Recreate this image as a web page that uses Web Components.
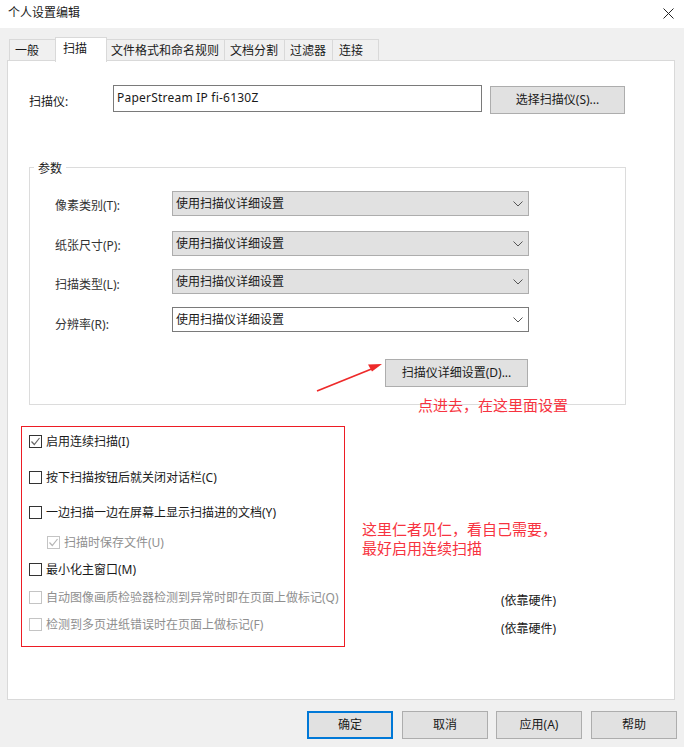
<!DOCTYPE html>
<html lang="zh"><head><meta charset="utf-8"><style>
html,body{margin:0;padding:0;background:#f0f0f0}
body{font:12px/16px "Noto Sans","Noto Sans CJK SC",sans-serif;color:#1a1a1a;width:684px;height:747px;overflow:hidden}
</style></head><body>
<x-dialog>
  <x-titlebar slot="title">个人设置编辑</x-titlebar>
  <x-tabs slot="tabs"><x-tab w="47" pad="5">一般</x-tab><x-tab w="52" pad="7" active>扫描</x-tab><x-tab w="119" pad="4">文件格式和命名规则</x-tab><x-tab w="61" pad="5">文档分割</x-tab><x-tab w="49" pad="5">过滤器</x-tab><x-tab w="47" pad="6">连接</x-tab></x-tabs>
  <x-panel slot="panel">
    <x-scanner-row></x-scanner-row>
    <x-group label="参数">
      <x-field label="像素类别(T):" off="7" style="margin-top:23px"></x-field>
      <x-field label="纸张尺寸(P):" off="7" style="margin-top:15px"></x-field>
      <x-field label="扫描类型(L):" off="8" style="margin-top:13px"></x-field>
      <x-field label="分辨率(R):" off="10" enabled style="margin-top:13px"></x-field>
      <x-button w="143" h="28" style="margin:27px 0 0 355px">扫描仪详细设置(D)...</x-button>
    </x-group>
    <x-options>
      <x-check checked gap="8">启用连续扫描(I)</x-check>
      <x-check gap="23">按下扫描按钮后就关闭对话栏(C)</x-check>
      <x-check gap="22">一边扫描一边在屏幕上显示扫描进的文档(Y)</x-check>
      <x-check checked disabled indent="18" gap="17">扫描时保存文件(U)</x-check>
      <x-check gap="14">最小化主窗口(M)</x-check>
      <x-check disabled gap="15">自动图像画质检验器检测到异常时即在页面上做标记(Q)</x-check>
      <x-check disabled gap="14">检测到多页进纸错误时在页面上做标记(F)</x-check>
    </x-options>
    <x-note style="left:354px;top:459px;width:210px;line-height:19px">这里仁者见仁，看自己需要，<br>最好启用连续扫描</x-note>
    <x-note style="left:410px;top:334px;width:170px;line-height:20px">点进去，在这里面设置</x-note>
    <x-hw style="left:493px;top:532px">(依靠硬件)</x-hw>
    <x-hw style="left:493px;top:560px">(依靠硬件)</x-hw>
    <x-arrow style="left:308px;top:298px"></x-arrow>
  </x-panel>
  <x-footer slot="footer">
    <x-button w="86" h="28" primary>确定</x-button>
    <x-button w="86" h="28" style="margin-left:9px">取消</x-button>
    <x-button w="86" h="28" style="margin-left:8px">应用(A)</x-button>
    <x-button w="86" h="28" style="margin-left:9px">帮助</x-button>
  </x-footer>
</x-dialog>
<script>
const def=(name,html,init)=>customElements.define(name,class extends HTMLElement{
  constructor(){super();this.attachShadow({mode:'open'}).innerHTML=typeof html==='function'?html(this):html;}
  connectedCallback(){
    if(typeof html==='function')this.shadowRoot.innerHTML=html(this);
    if(init)init(this);
  }
});
def('x-dialog',`<style>:host{display:flex;flex-direction:column;width:684px;height:747px}</style>
<slot name="title"></slot><slot name="tabs"></slot><slot name="panel"></slot><slot name="footer"></slot>`);
def('x-titlebar',`<style>:host{display:flex;align-items:center;justify-content:space-between;height:28px;background:#fff;padding:0 10px 2px 8px;box-sizing:border-box;flex:none}
svg{display:block;margin-top:0}</style><slot></slot><svg width="11" height="11" viewBox="0 0 11 11"><path d="M.5.5l10 10M10.5.5l-10 10" stroke="#222" stroke-width="1" fill="none"/></svg>`);
def('x-tabs',`<style>:host{display:flex;height:33px;padding:0 0 0 9px;align-items:flex-end;flex:none;box-sizing:border-box;position:relative;z-index:1;margin-bottom:-1px}</style><slot></slot>`);
def('x-tab',h=>{const a=h.hasAttribute('active');return `<style>:host{display:flex;box-sizing:border-box;width:${h.getAttribute('w')}px;height:${a?25:22}px;${a?'margin-bottom:-1px;':''}
background:${a?'#fff':'#f0f0f0'};border:1px solid #d9d9d9;${a?'border-bottom:0;':''}margin-right:-1px;
align-items:center;justify-content:flex-start;padding:${a?0:1}px 0 ${a?2:0}px ${h.getAttribute('pad')}px;white-space:nowrap;color:#1a1a1a;${a?'position:relative;z-index:2':''}}</style><slot></slot>`});
def('x-panel',`<style>:host{display:block;position:relative;box-sizing:border-box;width:668px;height:640px;margin-left:7px;background:#fff;border:1px solid #d9d9d9;padding:24px 0 0 21px;flex:none}</style><slot></slot>`);
def('x-scanner-row',`<style>:host{display:flex;align-items:flex-start}
.l{width:84px;margin-top:9px;flex:none}
.i{width:369px;height:27px;box-sizing:border-box;border:1px solid #7a7a7a;padding:4px 0 0 3px;letter-spacing:.22px;flex:none}
</style><div class="l">扫描仪:</div><div class="i">PaperStream IP fi-6130Z</div><x-button w="135" h="28" style="margin:1px 0 0 8px">选择扫描仪(S)...</x-button>`);
def('x-button',h=>{const p=h.hasAttribute('primary');return `<style>:host{display:flex;box-sizing:border-box;width:${h.getAttribute('w')}px;height:${h.getAttribute('h')}px;background:#e1e1e1;border:${p?'2px solid #0078d7':'1px solid #adadad'};align-items:center;justify-content:center;white-space:nowrap;color:#1a1a1a;flex:none}</style><slot></slot>`});
def('x-group',h=>`<style>:host{display:block;box-sizing:border-box;position:relative;width:597px;height:238px;margin-top:53px;border:1px solid #dcdcdc}
.lg{position:absolute;left:4px;top:-7px;background:#fff;padding:0 4px}</style><div class="lg">${h.getAttribute('label')}</div><slot></slot>`);
def('x-field',h=>`<style>:host{display:flex;height:25px;box-sizing:border-box;padding-left:25px}
.l{width:117px;flex:none;padding-top:${h.getAttribute('off')}px;color:#333}
.s{display:flex;align-items:center;justify-content:space-between;width:357px;box-sizing:border-box;padding:0 4px 0 3px;border:1px solid ${h.hasAttribute('enabled')?'#7a7a7a':'#adadad'};background:${h.hasAttribute('enabled')?'#fff':'#e1e1e1'}}
svg{display:block;margin-top:1px}</style><div class="l">${h.getAttribute('label')}</div><div class="s"><span>使用扫描仪详细设置</span><svg width="12" height="8" viewBox="0 0 12 8"><path d="M1.5 1.5L6 6l4.5-4.5" stroke="#555" stroke-width="1" fill="none"/></svg></div>`);
def('x-options',`<style>:host{display:block;box-sizing:border-box;width:324px;height:221px;margin:21px 0 0 -8px;border:1px solid #ed1c24;padding-left:7px}</style><slot></slot>`);
def('x-check',h=>{const d=h.hasAttribute('disabled'),c=h.hasAttribute('checked');return `<style>:host{display:flex;align-items:center;height:13px;margin-top:${h.getAttribute('gap')}px;margin-left:${h.getAttribute('indent')||0}px;color:${d?'#8f8f8f':'#1a1a1a'};white-space:nowrap}
.b{box-sizing:border-box;width:13px;height:13px;border:1px solid ${d?'#c4c4c4':'#333'};margin-right:4px;flex:none;background:#fff}svg{display:block}</style><div class="b">${c?`<svg width="11" height="11" viewBox="0 0 11 11"><path d="M1.5 5.5l2.8 3L9.5 2" stroke="${d?'#b5b5b5':'#666'}" stroke-width="1.2" fill="none"/></svg>`:''}</div><slot></slot>`});
def('x-note',`<style>:host{position:absolute;display:block;color:#f73340;font-size:15px;white-space:nowrap}</style><slot></slot>`);
def('x-hw',`<style>:host{position:absolute;display:block;white-space:nowrap;font-size:12px}</style><slot></slot>`);
def('x-arrow',`<style>:host{position:absolute;display:block;width:70px;height:34px}svg{display:block}</style><svg width="70" height="34" viewBox="0 0 70 34"><path d="M1 32L58 9" stroke="#ee2a2a" stroke-width="1.8" fill="none"/><path d="M66 5L52 5.5 56 12.5z" fill="#ee2a2a"/></svg>`);
def('x-footer',`<style>:host{display:flex;justify-content:flex-end;padding:11px 7px 0 0;flex:none}</style><slot></slot>`);
</script>
</body></html>
